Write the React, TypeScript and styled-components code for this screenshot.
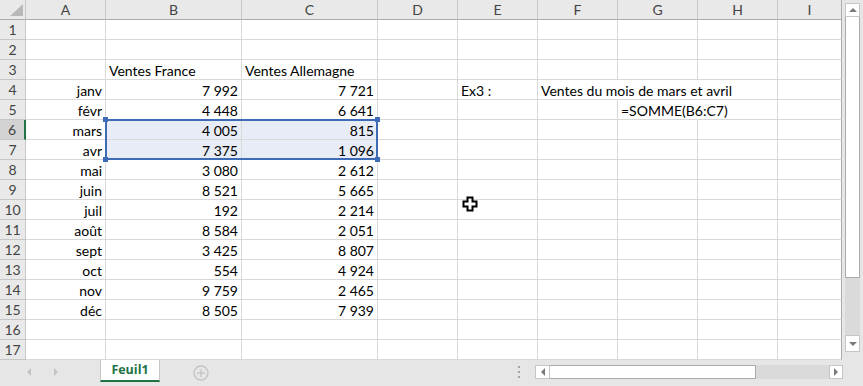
import styled, { createGlobalStyle } from 'styled-components';

const GlobalStyle = createGlobalStyle`
  html, body {
    margin: 0;
    padding: 0;
    background: #ffffff;
  }
  body {
    font-family: Lato, 'Liberation Sans', sans-serif;
    overflow: hidden;
  }
`;

const COLUMNS = [
  { key: 'A', width: 80 },
  { key: 'B', width: 136 },
  { key: 'C', width: 136 },
  { key: 'D', width: 80 },
  { key: 'E', width: 80 },
  { key: 'F', width: 80 },
  { key: 'G', width: 80 },
  { key: 'H', width: 80 },
  { key: 'I', width: 64 },
];

const MONTHS: [string, string, string][] = [
  ['janv', '7 992', '7 721'],
  ['févr', '4 448', '6 641'],
  ['mars', '4 005', '815'],
  ['avr', '7 375', '1 096'],
  ['mai', '3 080', '2 612'],
  ['juin', '8 521', '5 665'],
  ['juil', '192', '2 214'],
  ['août', '8 584', '2 051'],
  ['sept', '3 425', '8 807'],
  ['oct', '554', '4 924'],
  ['nov', '9 759', '2 465'],
  ['déc', '8 505', '7 939'],
];

type CellDef = { text: string; align: 'left' | 'right' };

const CELLS: Record<string, CellDef> = {
  B3: { text: 'Ventes France', align: 'left' },
  C3: { text: 'Ventes Allemagne', align: 'left' },
  E4: { text: 'Ex3 :', align: 'left' },
  F4: { text: 'Ventes du mois de mars et avril', align: 'left' },
  G5: { text: '=SOMME(B6:C7)', align: 'left' },
};
MONTHS.forEach(([m, fr, de], i) => {
  const r = i + 4;
  CELLS[`A${r}`] = { text: m, align: 'right' };
  CELLS[`B${r}`] = { text: fr, align: 'right' };
  CELLS[`C${r}`] = { text: de, align: 'right' };
});

// cells whose text runs over the right gridline
const OVERFLOW = new Set(['F4', 'G4', 'G5']);
const SELECTED = new Set(['B6', 'C6', 'B7', 'C7']);
const ACTIVE_ROW = 6;
const ROW_COUNT = 17;

const Window = styled.div`
  width: 863px;
  height: 386px;
  display: flex;
  flex-direction: column;
  background: #e6e6e6;
`;

const Main = styled.div`
  display: flex;
  height: 360px;
`;

const Sheet = styled.div`
  position: relative;
  display: grid;
  grid-template-columns: 26px ${COLUMNS.map((c) => `${c.width}px`).join(' ')};
  grid-auto-rows: 20px;
  width: 842px;
  background: #ffffff;
`;

const Corner = styled.div`
  box-sizing: border-box;
  background: #e9e9e9;
  border-right: 1px solid #c6c6c6;
  border-bottom: 1px solid #ababab;
  display: flex;
  align-items: flex-end;
  justify-content: flex-end;
  padding: 0 2px 3px 0;
`;

const ColHead = styled.div<{ $last?: boolean }>`
  box-sizing: border-box;
  background: #e9e9e9;
  border-right: 1px solid ${({ $last }) => ($last ? '#ababab' : '#c6c6c6')};
  border-bottom: 1px solid #ababab;
  color: #444444;
  font-size: 14px;
  line-height: 20px;
  text-align: center;
`;

const RowHead = styled.div<{ $active?: boolean }>`
  box-sizing: border-box;
  background: ${({ $active }) => ($active ? '#d3d3d3' : '#e9e9e9')};
  border-right: ${({ $active }) =>
    $active ? '2px solid #217346' : '1px solid #c6c6c6'};
  border-bottom: 1px solid #c6c6c6;
  color: #444444;
  font-size: 14px;
  line-height: 20px;
  text-align: center;
`;

const Cell = styled.div<{
  $align: 'left' | 'right';
  $overflow?: boolean;
  $selected?: boolean;
  $last?: boolean;
}>`
  box-sizing: border-box;
  min-width: 0;
  padding: 1px 3px 0 3px;
  border-right: 1px solid
    ${({ $overflow, $last }) =>
      $last ? '#ababab' : $overflow ? 'transparent' : '#d9d9d9'};
  border-bottom: 1px solid #d9d9d9;
  background: ${({ $selected }) => ($selected ? '#e7ecf6' : 'transparent')};
  color: #000000;
  font-size: 14px;
  line-height: 19px;
  text-align: ${({ $align }) => $align};
  white-space: nowrap;
  overflow: visible;
  direction: ${({ $align }) => ($align === 'right' ? 'rtl' : 'ltr')};
`;

const CellText = styled.span`
  direction: ltr;
  unicode-bidi: isolate;
`;

const RefBox = styled.div`
  position: absolute;
  left: 105px;
  top: 119px;
  width: 273px;
  height: 41px;
  box-sizing: border-box;
  border: 2px solid #3d6bb5;
  pointer-events: none;
`;

const Handle = styled.span<{ $x: 'left' | 'right'; $y: 'top' | 'bottom' }>`
  position: absolute;
  width: 5px;
  height: 5px;
  background: #3d6bb5;
  ${({ $x }) => $x}: -4px;
  ${({ $y }) => $y}: -4px;
`;

const Cursor = styled.svg`
  position: absolute;
  left: 462px;
  top: 196px;
`;

const VScroll = styled.div`
  width: 21px;
  box-sizing: border-box;
  padding: 3px 3px 0 3px;
  display: flex;
  flex-direction: column;
`;

const ArrowBox = styled.div<{ $w?: number; $h?: number }>`
  box-sizing: border-box;
  width: ${({ $w }) => $w ?? 15}px;
  height: ${({ $h }) => $h ?? 15}px;
  background: #ffffff;
  border: 1px solid #c6c6c6;
  display: flex;
  align-items: center;
  justify-content: center;
  flex-shrink: 0;
`;

const VThumb = styled.div`
  box-sizing: border-box;
  height: 261px;
  background: #ffffff;
  border: 1px solid #ababab;
  border-top: none;
`;

const VTrack = styled.div`
  height: 57px;
  background: #dadada;
`;

const BottomBar = styled.div`
  height: 26px;
  display: flex;
  align-items: flex-start;
  background: #e6e6e6;
`;

const NavArea = styled.div`
  width: 100px;
  height: 24px;
  display: flex;
  align-items: center;
  padding-left: 27px;
  gap: 23px;
  box-sizing: border-box;
`;

const SheetTab = styled.div`
  box-sizing: border-box;
  width: 60px;
  height: 24px;
  margin-top: -2px;
  background: #ffffff;
  border-left: 1px solid #c6c6c6;
  border-right: 1px solid #c6c6c6;
  border-bottom: 2px solid #217346;
  color: #217346;
  font-family: 'Open Sans', 'Liberation Sans', sans-serif;
  font-weight: 700;
  font-size: 12.5px;
  line-height: 24px;
  text-align: center;
`;

const AddSheet = styled.div`
  margin: 5px 0 0 33px;
  display: flex;
`;

const Dots = styled.div`
  margin: 6px 15px 0 auto;
  display: flex;
  flex-direction: column;
  gap: 3px;
`;

const Dot = styled.span`
  width: 2px;
  height: 2px;
  background: #a6a6a6;
`;

const HScroll = styled.div`
  margin: 5px 20px 0 0;
  display: flex;
  height: 14px;
`;

const HThumb = styled.div`
  box-sizing: border-box;
  width: 206px;
  background: #ffffff;
  border: 1px solid #ababab;
  border-left: none;
`;

const HTrack = styled.div`
  width: 73px;
  background: #dadada;
`;

const Tri = ({ dir, color = '#7a7a7a' }: { dir: 'up' | 'down' | 'left' | 'right'; color?: string }) => {
  const pts = {
    up: '0,4 4,0 8,4',
    down: '0,0 8,0 4,4',
    left: '4,0 4,8 0,4',
    right: '0,0 0,8 4,4',
  }[dir];
  const vertical = dir === 'up' || dir === 'down';
  return (
    <svg width={vertical ? 8 : 4} height={vertical ? 4 : 8}>
      <polygon points={pts} fill={color} />
    </svg>
  );
};

const App = () => {
  const rows = Array.from({ length: ROW_COUNT }, (_, i) => i + 1);
  return (
    <Window>
      <GlobalStyle />
      <Main>
        <Sheet>
          <Corner>
            <svg width="13" height="12">
              <polygon points="0,12 13,12 13,0" fill="#b9b9b9" />
            </svg>
          </Corner>
          {COLUMNS.map((c, i) => (
            <ColHead key={c.key} $last={i === COLUMNS.length - 1}>
              {c.key}
            </ColHead>
          ))}
          {rows.map((r) => [
            <RowHead key={`h${r}`} $active={r === ACTIVE_ROW}>
              {r}
            </RowHead>,
            ...COLUMNS.map((c, i) => {
              const id = `${c.key}${r}`;
              const def = CELLS[id];
              return (
                <Cell
                  key={id}
                  $align={def?.align ?? 'left'}
                  $overflow={OVERFLOW.has(id)}
                  $selected={SELECTED.has(id)}
                  $last={i === COLUMNS.length - 1}
                >
                  {def && <CellText>{def.text}</CellText>}
                </Cell>
              );
            }),
          ])}
          <RefBox>
            <Handle $x="left" $y="top" />
            <Handle $x="right" $y="top" />
            <Handle $x="left" $y="bottom" />
            <Handle $x="right" $y="bottom" />
          </RefBox>
          <Cursor width="16" height="16" viewBox="0 0 16 16">
            <polygon
              points="5.5,1.5 10.5,1.5 10.5,5.5 14.5,5.5 14.5,10.5 10.5,10.5 10.5,14.5 5.5,14.5 5.5,10.5 1.5,10.5 1.5,5.5 5.5,5.5"
              fill="#ffffff"
              stroke="#000000"
              strokeWidth="2"
              strokeLinejoin="miter"
            />
          </Cursor>
        </Sheet>
        <VScroll>
          <ArrowBox $h={14}>
            <Tri dir="up" />
          </ArrowBox>
          <VThumb />
          <VTrack />
          <ArrowBox $h={17}>
            <Tri dir="down" />
          </ArrowBox>
        </VScroll>
      </Main>
      <BottomBar>
        <NavArea>
          <Tri dir="left" color="#c3c3c3" />
          <Tri dir="right" color="#c3c3c3" />
        </NavArea>
        <SheetTab>Feuil1</SheetTab>
        <AddSheet>
          <svg width="16" height="16" viewBox="0 0 16 16">
            <circle cx="8" cy="8" r="7" fill="none" stroke="#c3c3c3" strokeWidth="1.3" />
            <line x1="4" y1="8" x2="12" y2="8" stroke="#c3c3c3" strokeWidth="1.3" />
            <line x1="8" y1="4" x2="8" y2="12" stroke="#c3c3c3" strokeWidth="1.3" />
          </svg>
        </AddSheet>
        <Dots>
          <Dot />
          <Dot />
          <Dot />
        </Dots>
        <HScroll>
          <ArrowBox $w={15} $h={14}>
            <Tri dir="left" />
          </ArrowBox>
          <HThumb />
          <HTrack />
          <ArrowBox $w={14} $h={14}>
            <Tri dir="right" />
          </ArrowBox>
        </HScroll>
      </BottomBar>
    </Window>
  );
};

export default App;
